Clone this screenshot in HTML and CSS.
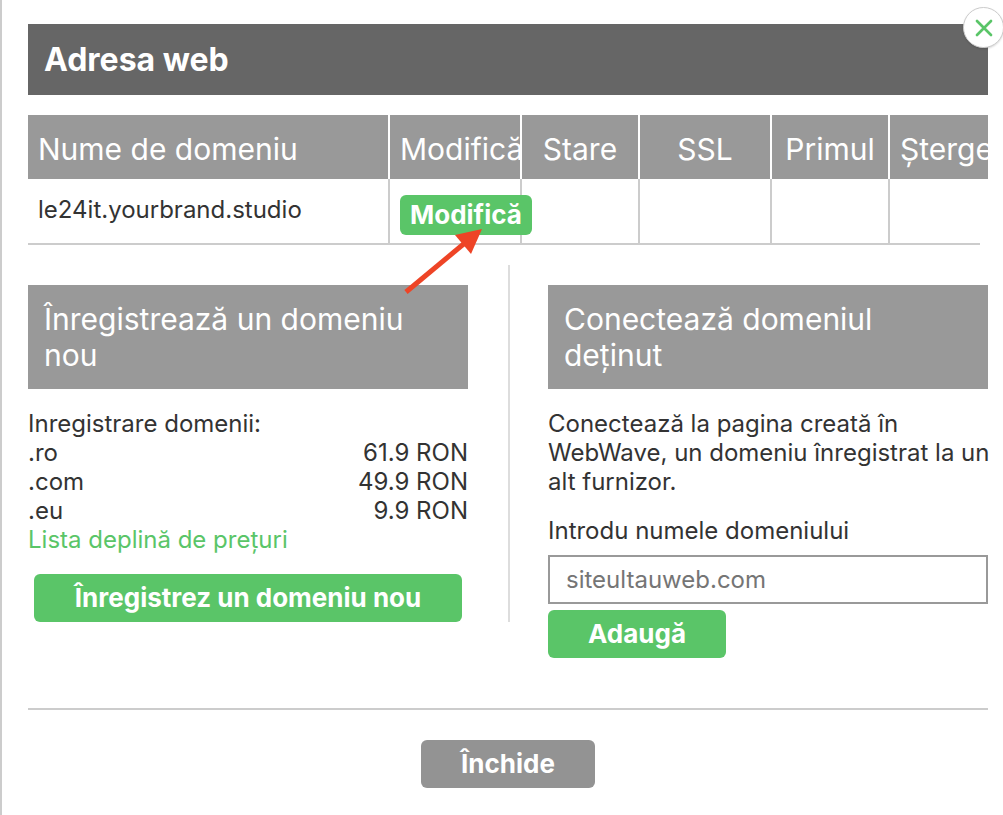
FILE: index.html
```html
<!DOCTYPE html>
<html lang="ro">
<head>
<meta charset="utf-8">
<meta name="viewport" content="width=device-width, initial-scale=1">
<title>Adresa web</title>
<link rel="stylesheet" href="styles.css">
</head>
<body>
<main class="dialog">
  <button class="close" type="button" aria-label="Închide fereastra">
    <svg class="close-icon" viewBox="0 0 18 18" aria-hidden="true"><path d="M2 2 16 16M16 2 2 16"/></svg>
  </button>
  <h1 class="title">Adresa web</h1>
  <table class="domains">
    <colgroup>
      <col><col class="col-wide"><col class="col-narrow"><col class="col-wide"><col class="col-narrow"><col class="col-delete"><col class="col-end">
    </colgroup>
    <thead>
      <tr>
        <th class="name" scope="col">Nume de domeniu</th>
        <th class="edit" scope="col">Modifică</th>
        <th scope="col">Stare</th>
        <th scope="col">SSL</th>
        <th scope="col">Primul</th>
        <th class="delete" scope="col" colspan="2">Şterge</th>
      </tr>
    </thead>
    <tbody>
      <tr>
        <td>le24it.yourbrand.studio</td>
        <td>
          <div class="pointed">
            <button class="btn btn-small" type="button">Modifică</button>
            <svg class="arrow" viewBox="0 0 80 68" aria-hidden="true"><path class="arrow-line" d="M2 64 62 14"/><path class="arrow-head" d="M78 1 51 7 67 26Z"/></svg>
          </div>
        </td>
        <td></td>
        <td></td>
        <td></td>
        <td class="last"></td>
        <td class="end"></td>
      </tr>
    </tbody>
  </table>
  <div class="columns">
    <section class="register">
      <h2 class="heading">Înregistrează un domeniu nou</h2>
      <p class="text">Inregistrare domenii:</p>
      <dl class="prices">
        <div class="price"><dt>.ro</dt><dd>61.9 RON</dd></div>
        <div class="price"><dt>.com</dt><dd>49.9 RON</dd></div>
        <div class="price"><dt>.eu</dt><dd>9.9 RON</dd></div>
      </dl>
      <a class="link" href="#">Lista deplină de prețuri</a>
      <button class="btn btn-register" type="button">Înregistrez un domeniu nou</button>
    </section>
    <section class="connect">
      <h2 class="heading">Conectează domeniul deținut</h2>
      <p class="text">Conectează la pagina creată în WebWave, un domeniu înregistrat la un alt furnizor.</p>
      <label class="label" for="domain">Introdu numele domeniului</label>
      <input class="input" id="domain" type="text" placeholder="siteultauweb.com">
      <button class="btn btn-add" type="button">Adaugă</button>
    </section>
  </div>
  <footer class="footer">
    <button class="btn btn-close" type="button">Închide</button>
  </footer>
</main>
</body>
</html>
```
FILE: styles.css
```css
* { box-sizing: border-box; }
body {
  margin: 0;
  background: #fff;
  color: #333;
  font-family: Inter, "Liberation Sans", sans-serif;
  font-size: 24px;
  line-height: 29px;
}
h1, h2, p, dl, dd { margin: 0; }
.dialog {
  position: relative;
  min-height: 100vh;
  padding: 24px 15px 24px 26px;
  border-left: 2px solid #ccc;
  overflow: hidden;
}
.title {
  padding: 18px 16px 17px;
  background: #666;
  color: #fff;
  font-size: 32px;
  line-height: 36px;
  font-weight: 700;
}
.close {
  position: absolute;
  top: 7px;
  right: -1px;
  display: flex;
  align-items: center;
  justify-content: center;
  width: 41px;
  height: 41px;
  padding: 0;
  border: 1px solid #ccc;
  border-radius: 50%;
  background: #fff;
  box-shadow: 0 1px 2px rgba(0, 0, 0, .15);
}
.close-icon { width: 18px; height: 18px; fill: none; stroke: #5ac568; stroke-width: 2.7; stroke-linecap: round; }

.domains {
  width: 100%;
  margin-top: 20px;
  table-layout: fixed;
  border-collapse: separate;
  border-spacing: 0;
}
.col-wide { width: 132px; }
.col-narrow { width: 118px; }
.col-delete { width: 90px; }
.col-end { width: 8px; }
.domains th {
  height: 64px;
  padding: 4px 0 0;
  background: #999;
  border-right: 2px solid #fff;
  color: #fff;
  font-size: 30px;
  line-height: 36px;
  font-weight: 400;
  white-space: nowrap;
}
.domains .name, .domains .edit, .domains .delete { padding-left: 10px; text-align: left; }
.domains .delete { border-right: 0; }
.domains td {
  height: 66px;
  padding: 16px 0 0 10px;
  border-right: 2px solid #ccc;
  border-bottom: 2px solid #ccc;
  vertical-align: top;
}
.domains .last { border-right: 0; }
.domains .end { border: 0; padding: 0; }
.pointed { position: relative; }
.arrow { position: absolute; left: 4px; top: 33px; width: 80px; height: 68px; pointer-events: none; }
.arrow-line { fill: none; stroke: #ee4426; stroke-width: 5; }
.arrow-head { fill: #ee4426; }

.btn {
  display: block;
  height: 48px;
  padding: 0 16px;
  border: 0;
  border-radius: 6px;
  background: #5ac568;
  color: #fff;
  font: 700 26px/32px Inter, "Liberation Sans", sans-serif;
  white-space: nowrap;
}
.btn-small { height: 40px; padding: 0 10px; }

.columns { display: grid; grid-template-columns: 1fr 1fr; gap: 80px; margin-top: 20px; align-items: start; }
.register { margin-right: -42px; padding: 20px 40px 0 0; border-right: 2px solid #ddd; }
.connect { padding-top: 20px; }
.heading {
  margin-bottom: 20px;
  padding: 16px;
  background: #999;
  color: #fff;
  font-size: 30px;
  line-height: 36px;
  font-weight: 400;
}
.connect .text { margin-right: -8px; }
.price { display: flex; justify-content: space-between; }
.link { display: block; color: #5ac568; text-decoration: none; }
.btn-register { width: calc(100% - 12px); margin: 20px 6px 0; }
.label { display: block; margin: 20px 0 10px; }
.input {
  display: block;
  width: 100%;
  height: 49px;
  padding: 0 16px;
  border: 2px solid #999;
  border-radius: 0;
  background: #fff;
  color: #333;
  font: inherit;
}
.input::placeholder { color: #757575; opacity: 1; }
.btn-add { margin-top: 6px; padding: 0 40px; }
.footer { display: flex; justify-content: center; margin-top: 50px; padding-top: 30px; border-top: 2px solid #ccc; }
.btn-close { padding: 0 40px; background: #939393; }
```
